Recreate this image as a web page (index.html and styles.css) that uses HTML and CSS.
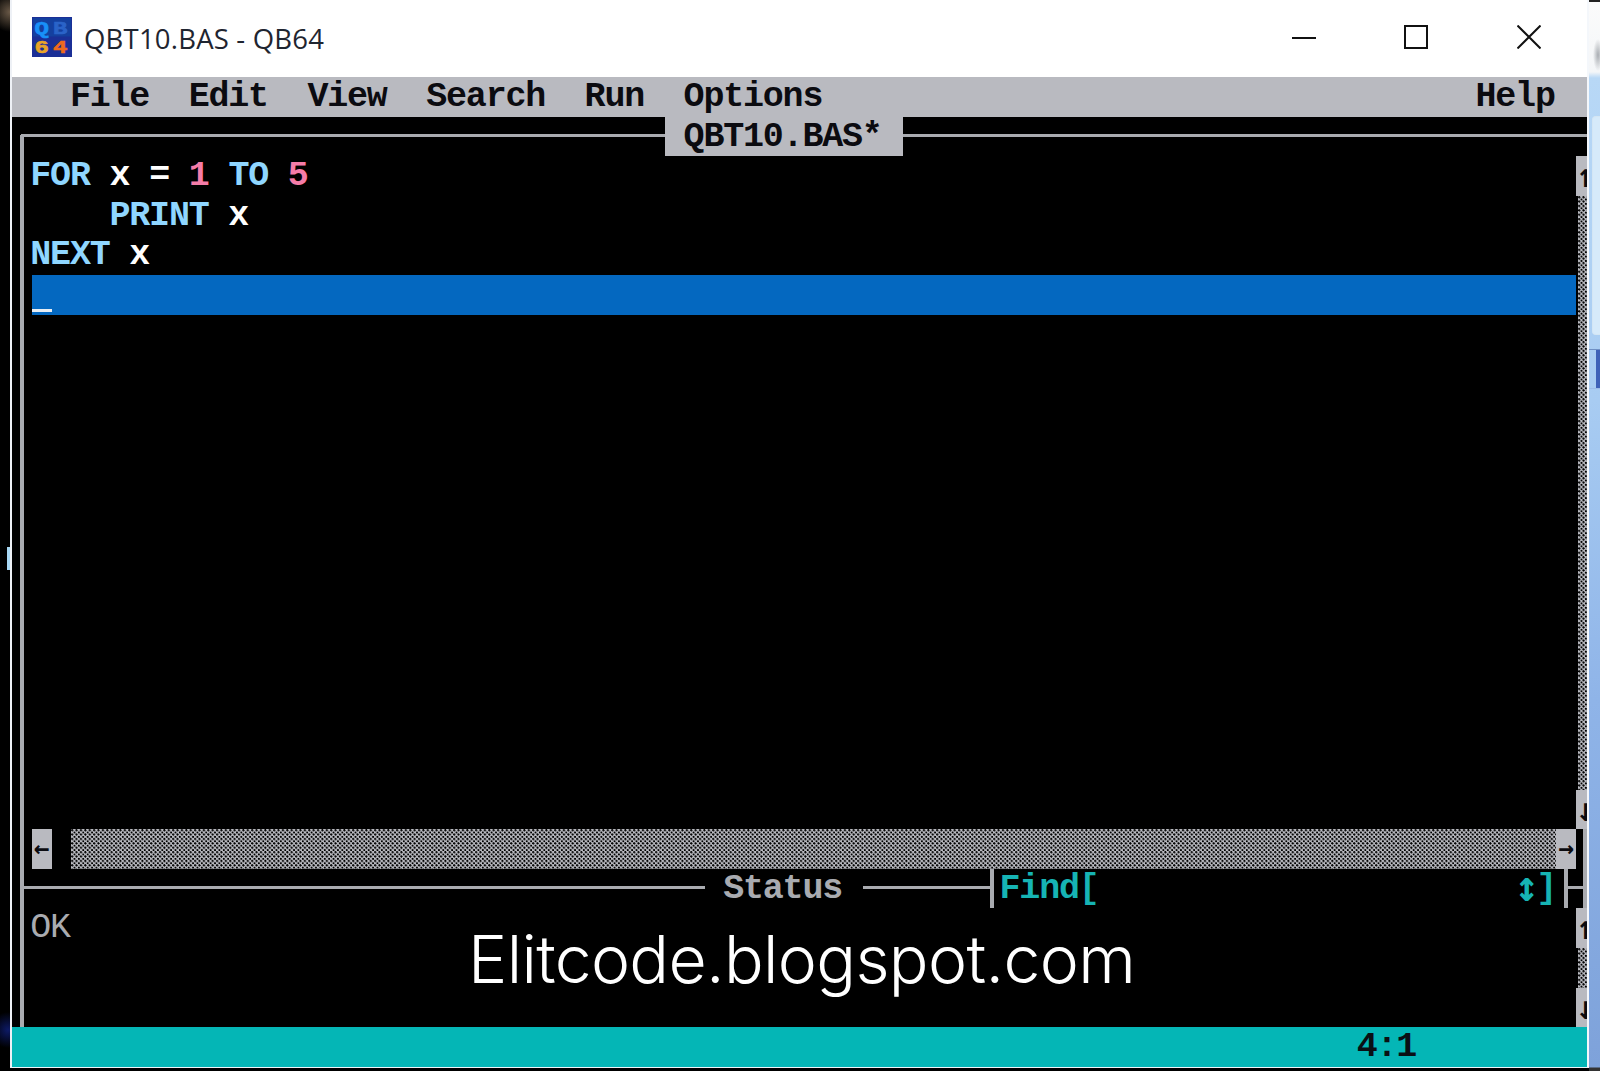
FILE: index.html
```html
<!DOCTYPE html>
<html lang="en">
<head>
<meta charset="utf-8">
<title>QBT10.BAS - QB64</title>
<link rel="stylesheet" href="styles.css">
</head>
<body>
<div class="desktop-left"></div>
<div class="window">
  <header class="titlebar">
    <svg class="app-icon" viewBox="0 0 39 39" aria-hidden="true">
      <rect width="39" height="39" fill="#1b2f96"/>
      <rect x="1" y="1" width="37" height="18" fill="#14409f"/>
      <text transform="translate(2.5 16.5) scale(1.3 1)" class="icon-q">Q</text>
      <text transform="translate(20.5 16.5) scale(1.3 1)" class="icon-b">B</text>
      <text transform="translate(2.5 35.5) scale(1.3 1)" class="icon-6">6</text>
      <text transform="translate(20.5 35.5) scale(1.3 1)" class="icon-4">4</text>
    </svg>
    <span class="title-text">QBT10.BAS - QB64</span>
    <div class="controls">
      <span class="ctl"><svg viewBox="0 0 24 24" width="24" height="24"><path d="M0 13H24" class="ctl-line"/></svg></span>
      <span class="ctl"><svg viewBox="0 0 24 24" width="24" height="24"><rect x="1" y="1" width="22" height="22" class="ctl-line"/></svg></span>
      <span class="ctl ctl-close"><svg viewBox="0 0 24 24" width="24" height="24"><path d="M0.5 0.5L23.5 23.5M23.5 0.5L0.5 23.5" class="ctl-line"/></svg></span>
    </div>
  </header>

  <main class="screen">
    <nav class="menubar">
      <span class="m-file">File</span>
      <span class="m-edit">Edit</span>
      <span class="m-view">View</span>
      <span class="m-search">Search</span>
      <span class="m-run">Run</span>
      <span class="m-options">Options</span>
      <span class="m-help">Help</span>
    </nav>

    <i class="frame-top"></i>
    <i class="frame-left"></i>
    <div class="file-tab">QBT10.BAS*</div>

    <div class="code l1"><b class="kw">FOR</b> x = <b class="num">1</b> <b class="kw">TO</b> <b class="num">5</b></div>
    <div class="code l2"><b class="kw">PRINT</b> x</div>
    <div class="code l3"><b class="kw">NEXT</b> x</div>
    <div class="current-line"><i class="cursor"></i></div>

    <div class="vbtn up-a">↑</div>
    <div class="vtrack track-a"></div>
    <div class="vbtn down-a">↓</div>

    <div class="hbtn left">←</div>
    <div class="htrack"></div>
    <div class="hbtn right">→</div>

    <i class="rule rule-a"></i>
    <span class="status-title">Status</span>
    <i class="rule rule-b"></i>
    <i class="tick tick-a"></i>
    <span class="find">Find[</span>
    <span class="find-arrows">↕</span>
    <span class="find-close">]</span>
    <i class="tick tick-b"></i>
    <i class="rule rule-c"></i>
    <i class="frame-right"></i>

    <div class="ok">OK</div>
    <div class="vbtn up-b">↑</div>
    <div class="vtrack track-b"></div>
    <div class="vbtn down-b">↓</div>

    <footer class="statusbar"><span class="pos">4:1</span></footer>
  </main>
  <div class="watermark">Elitcode.blogspot.com</div>
</div>
<div class="desktop-edge">
  <div class="edge-box"></div>
  <div class="edge-band"></div>
</div>
</body>
</html>
```
FILE: styles.css
```css
:root {
  --cw: 19.8px;
  --ch: 39.6px;
  --gray: #b9bac0;
  --line: #a9abb0;
}
* { box-sizing: border-box; }
html, body { margin: 0; height: 1071px; overflow: hidden; }
body {
  display: flex;
  align-items: flex-start;
  background: #000;
}
.desktop-left {
  flex: 0 0 10px;
  height: 1071px;
  background:
    linear-gradient(transparent 547px, #a8d8f4 547px, #a8d8f4 570px, transparent 570px) right / 3px 100% no-repeat,
    radial-gradient(circle at 10px 12px, #6b5a48 0, transparent 20px),
    radial-gradient(circle at 8px 1030px, #0d1a66 0, transparent 18px),
    #000;
}
.window {
  position: relative;
  flex: 0 0 1579px;
  height: 1068px;
  background: #fff;
  border-left: 2px solid #eef1f6;
  border-right: 2px solid #f4f7fb;
  border-bottom: 1px solid #eef4f8;
  overflow: hidden;
}
.desktop-edge {
  flex: 1;
  height: 1071px;
  display: flex;
  flex-direction: column;
  padding: 116px 0 0 3px;
  background:
    radial-gradient(ellipse 5px 16px at 9px 55px, #a9adb2 0, transparent 100%),
    linear-gradient(#222 0, #222 2px, #fbfbfb 2px, #f4f6f8 72px, #b8d8f6 78px, #a8ccf2 400px, #8fb4e8 700px, #7ea2da 1067px, #333 1068px);
}
.edge-box {
  height: 219px;
  border: 1px solid #d4e6f4;
  border-right: 0;
  border-radius: 4px 0 0 4px;
  background: #d6eafa;
}
.edge-band {
  height: 40px;
  margin: 14px 0 0 -3px;
  border-top: 1px solid #6f90c4;
  border-bottom: 1px solid #9dbce8;
  background: linear-gradient(to right, transparent 7px, #3f62b8 7px);
}

/* title bar */
.titlebar {
  height: 77px;
  display: flex;
  align-items: center;
  padding-left: 20px;
  background: #fff;
}
.app-icon { width: 40px; height: 40px; margin-right: 12px; margin-top: -3px; flex: none; }
.app-icon text { font: 700 18px "Liberation Mono", monospace; stroke-width: 0.6px; }
.icon-q { fill: #1890f8; stroke: #1890f8; }
.icon-b { fill: #2a63c8; stroke: #2a63c8; }
.icon-6 { fill: #e8a428; stroke: #e8a428; }
.icon-4 { fill: #ee6a1c; stroke: #ee6a1c; }
.title-text {
  font: 400 27.5px "Open Sans", sans-serif;
  letter-spacing: 0.2px;
  color: #1f2530;
  margin-top: -1px;
}
.controls { margin-left: auto; display: flex; padding-right: 2px; margin-top: -3px; }
.ctl { width: 111.5px; display: flex; justify-content: center; align-items: center; }
.ctl-close { margin-left: 2px; }
.ctl svg { display: block; }
.ctl-line { fill: none; stroke: #111; stroke-width: 2; }

/* text-mode screen: 80 x 25 cells */
.screen {
  display: grid;
  grid-template-columns: repeat(80, var(--cw));
  grid-template-rows: repeat(25, var(--ch));
  background: #000;
  font: 700 35px/41.6px "Liberation Mono", monospace;
  letter-spacing: -1.2px;
  text-indent: -1.5px;
  white-space: pre;
  color: #fff;
}
.screen b { font-weight: 700; }
.screen i { display: block; }

.menubar {
  grid-column: 1 / -1;
  grid-row: 1;
  display: grid;
  grid-template-columns: repeat(80, var(--cw));
  grid-template-rows: var(--ch);
  background: var(--gray);
  color: #0b0b10;
}
.m-file { grid-column: 4 / span 4; }
.m-edit { grid-column: 10 / span 4; }
.m-view { grid-column: 16 / span 4; }
.m-search { grid-column: 22 / span 6; }
.m-run { grid-column: 30 / span 3; }
.m-options { grid-column: 35 / span 7; }
.m-help { grid-column: 75 / span 4; }

.frame-top {
  grid-column: 1 / -1;
  grid-row: 2;
  align-self: center;
  height: 3px;
  margin: 0 0 2px 9px;
  background: var(--line);
}
.frame-left {
  grid-column: 1;
  grid-row: 2 / span 23;
  justify-self: center;
  width: 4px;
  margin-top: 18px;
  background: var(--line);
}
.file-tab {
  grid-column: 34 / span 12;
  grid-row: 2;
  background: var(--gray);
  color: #0b0b10;
  padding-left: var(--cw);
  z-index: 1;
}

.code { grid-column: 2 / span 40; }
.l1 { grid-row: 3; }
.l2 { grid-row: 4; padding-left: calc(var(--cw) * 4); }
.l3 { grid-row: 5; }
.kw { color: #8fd6ff; }
.num { color: #f57ca8; }
.current-line {
  grid-column: 2 / span 78;
  grid-row: 6;
  background: #0468c0;
  position: relative;
}
.cursor {
  position: absolute;
  left: 0;
  bottom: 3px;
  width: var(--cw);
  height: 3px;
  background: #e8eef4;
}

/* scrollbars */
.vbtn, .hbtn {
  background: var(--gray);
  color: #0b0b10;
  text-align: center;
  font: 700 26px/39.6px "DejaVu Sans Mono", monospace;
  letter-spacing: 0;
  text-indent: 0;
}
.vbtn { grid-column: 80; font-size: 33px; }
.up-a { grid-row: 3; }
.down-a { grid-row: 19; }
.up-b { grid-row: 22; }
.down-b { grid-row: 24; }
.vtrack, .htrack {
  background-color: var(--gray);
  background-image:
    radial-gradient(circle at 1.2px 1.2px, #000 0.9px, transparent 1.3px),
    radial-gradient(circle at 3.4px 3.4px, #000 0.9px, transparent 1.3px);
  background-size: 4.4px 4.4px;
}
.vtrack { grid-column: 80; margin-left: 2px; }
.track-a { grid-row: 4 / span 15; }
.track-b { grid-row: 23; }
.hbtn { grid-row: 20; }
.hbtn.left { grid-column: 2; }
.hbtn.right { grid-column: 79; }
.htrack { grid-column: 4 / span 75; grid-row: 20; }

/* status separator row */
.rule { grid-row: 21; height: 3px; align-self: center; margin-bottom: 3px; background: var(--line); }
.rule-a { grid-column: 1 / 36; margin-left: 11px; }
.rule-b { grid-column: 44 / 50; margin-right: -10px; }
.rule-c { grid-column: 79 / 81; margin-left: 10px; }
.tick { grid-row: 21; width: 4px; justify-self: center; background: var(--line); }
.tick-a { grid-column: 50; }
.tick-b { grid-column: 79; }
.status-title { grid-column: 37 / span 6; grid-row: 21; color: #a9abb0; }
.find { grid-column: 50 / span 5; grid-row: 21; margin-left: 19px; color: #16b4b4; }
.find-arrows { grid-column: 77; grid-row: 21; color: #16b4b4; font-family: "DejaVu Sans Mono", monospace; font-size: 33px; line-height: 36px; text-indent: 0; letter-spacing: 0; text-align: center; transform: scale(1.2, 1.3); }
.find-close { grid-column: 78; grid-row: 21; color: #16b4b4; text-align: right; }
.frame-right {
  grid-column: 80;
  grid-row: 20 / span 2;
  justify-self: center;
  width: 4px;
  margin-right: 2px;
  background: var(--line);
}

.ok { grid-column: 2 / span 2; grid-row: 22; color: #a9abb0; font-weight: 400; }

.statusbar {
  grid-column: 1 / -1;
  grid-row: 25;
  display: grid;
  grid-template-columns: repeat(80, var(--cw));
  grid-template-rows: var(--ch);
  background: #04b6b6;
  color: #0a1014;
}
.pos { grid-column: 69 / span 3; }

.watermark {
  position: absolute;
  left: 456px;
  top: 919px;
  color: #fff;
  font: 300 66px/80px "Inter", sans-serif;
  letter-spacing: -0.65px;
  white-space: nowrap;
}
```
